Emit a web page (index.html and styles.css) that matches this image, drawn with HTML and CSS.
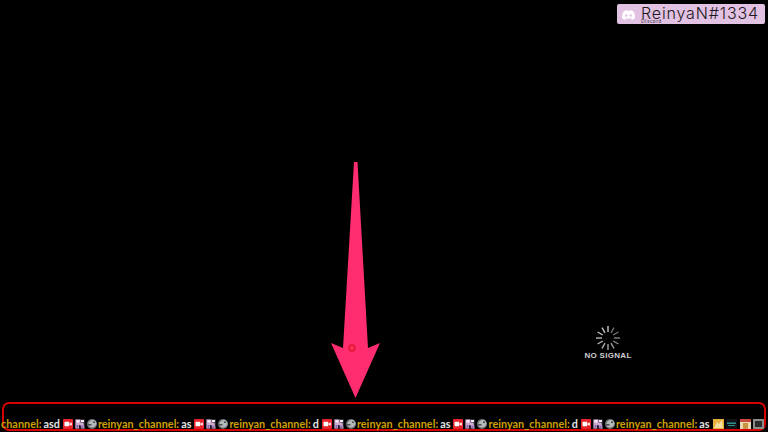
FILE: index.html
```html
<!DOCTYPE html>
<html lang="en">
<head>
    <meta charset="UTF-8">
    <meta name="viewport" content="width=device-width, initial-scale=1.0">
    <title>Stream overlay</title>
    <link rel="stylesheet" href="styles.css">
</head>
<body>
    <svg class="defs" width="0" height="0">
        <symbol id="cam" viewBox="0 0 10 10">
            <rect width="10" height="10" rx="1" fill="#e8212b"/>
            <rect x="1.5" y="2.800" width="4.800" height="4.400" rx=".7" fill="#fff"/>
            <path d="M6.400 4.800l2.400-1.500v3.400L6.400 5.400z" fill="#fff"/>
        </symbol>
        <symbol id="kit" viewBox="0 0 10 10">
            <rect width="10" height="10" fill="#2a2630"/>
            <path d="M.5.5h5v3h3l1 6H6.500L5.500 6H4v3.500H.5z" fill="#cfa9d2"/>
            <path d="M1.500 1h3v2.500h-3zM6 1h3v2H6z" fill="#f2eef2"/>
            <path d="M1.500 6h2v3h-2zM6.500 6.500h2V9h-2z" fill="#8d6fb0"/>
        </symbol>
        <symbol id="orb" viewBox="0 0 10 10">
            <circle cx="5" cy="5" r="5" fill="#70757a"/>
            <path d="M1.500 5.500c0-3 2-4.500 4.500-4.500 2.200 0 3.500 2 3.500 4-1 2.500-3 3.500-4.500 3.500-1.800 0-3.500-1-3.500-3z" fill="#b4b9ba"/>
            <path d="M.5 5h4v1.500h-4zM6 2.500h2V4H6z" fill="#4a4f52"/>
        </symbol>
    </svg>

    <div class="tag-row">
        <div class="tag">
            <svg class="tag-icon" viewBox="0 0 24 18">
                <path fill="#fff" d="M20.300 1.500A19.800 19.800 0 0 0 15.400 0l-.6 1.300a18.400 18.400 0 0 0-5.500 0L8.600 0a19.700 19.700 0 0 0-4.900 1.500C.6 6.100-.3 10.600.100 15a19.900 19.900 0 0 0 6.100 3l1.300-2a13 13 0 0 1-2-1l.5-.4a14.200 14.200 0 0 0 12 0l.5.400a13 13 0 0 1-2 1l1.300 2a19.900 19.900 0 0 0 6.100-3c.5-5.100-.8-9.500-3.600-13.500zM8 12.300c-1.200 0-2.200-1.100-2.200-2.400S6.800 7.400 8 7.400s2.200 1.100 2.200 2.500-1 2.400-2.200 2.400zm8 0c-1.200 0-2.200-1.100-2.200-2.400s1-2.500 2.200-2.500 2.200 1.100 2.200 2.500-1 2.400-2.200 2.400z"/>
            </svg>
            <div class="tag-text">
                <span class="tag-name">ReinyaN#1334</span>
                <span class="tag-sub">Discord</span>
            </div>
        </div>
    </div>

    <div class="chat">
        <div class="chat-line">
            <span class="name">channel:</span><span class="msg">asd</span>
            <span class="badges"><svg><use href="#cam"/></svg><svg><use href="#kit"/></svg><svg><use href="#orb"/></svg></span>
            <span class="name">reinyan_channel:</span><span class="msg">as</span>
            <span class="badges"><svg><use href="#cam"/></svg><svg><use href="#kit"/></svg><svg><use href="#orb"/></svg></span>
            <span class="name">reinyan_channel:</span><span class="msg">d</span>
            <span class="badges"><svg><use href="#cam"/></svg><svg><use href="#kit"/></svg><svg><use href="#orb"/></svg></span>
            <span class="name">reinyan_channel:</span><span class="msg">as</span>
            <span class="badges"><svg><use href="#cam"/></svg><svg><use href="#kit"/></svg><svg><use href="#orb"/></svg></span>
            <span class="name">reinyan_channel:</span><span class="msg">d</span>
            <span class="badges"><svg><use href="#cam"/></svg><svg><use href="#kit"/></svg><svg><use href="#orb"/></svg></span>
            <span class="name">reinyan_channel:</span><span class="msg">as</span>
            <span class="emotes">
                <svg viewBox="0 0 11 10"><rect width="11" height="10" fill="#e8b23c"/><path d="M1 9l3-6 2 2 3-4 1 8z" fill="#f6dfa0"/></svg>
                <svg viewBox="0 0 11 10"><rect width="11" height="10" fill="#101418"/><path d="M1 3.500h9V5H1zM2 6h7v1H2z" fill="#2f8f88"/></svg>
                <svg viewBox="0 0 11 10"><rect width="11" height="10" fill="#e9d9b5"/><path d="M0 0h11v3H0z" fill="#c94a3c"/><path d="M3 4h5v6H3z" fill="#c9933f"/></svg>
                <svg viewBox="0 0 11 10"><rect width="11" height="10" fill="#8b8d8a"/><rect x="2" y="2" width="7" height="6" fill="#2c2d2c"/></svg>
            </span>
        </div>
    </div>

    <svg class="arrow" viewBox="0 0 52 240" width="52" height="240">
        <path d="M24 1h3.500L38 187l12-5-24.500 55L1 182l12 5z" fill="#ff2d6f"/>
        <circle cx="22" cy="187" r="3" fill="#f5305a" stroke="#e4122e" stroke-width="1.400"/>
    </svg>

    <div class="no-signal">
        <svg class="spinner" viewBox="-13 -13 26 26" width="26" height="26">
            <g stroke="#d8d8d8" stroke-width="1.400">
                <path d="M0-12v6" opacity=".95"/>
                <path d="M0-12v6" transform="rotate(30)" opacity=".5"/>
                <path d="M0-12v6" transform="rotate(60)" opacity=".55"/>
                <path d="M0-12v6" transform="rotate(90)" opacity=".6"/>
                <path d="M0-12v6" transform="rotate(120)" opacity=".65"/>
                <path d="M0-12v6" transform="rotate(150)" opacity=".7"/>
                <path d="M0-12v6" transform="rotate(180)" opacity=".75"/>
                <path d="M0-12v6" transform="rotate(210)" opacity=".8"/>
                <path d="M0-12v6" transform="rotate(240)" opacity=".85"/>
                <path d="M0-12v6" transform="rotate(270)" opacity=".85"/>
                <path d="M0-12v6" transform="rotate(300)" opacity=".9"/>
                <path d="M0-12v6" transform="rotate(330)" opacity=".9"/>
            </g>
        </svg>
        <span class="no-signal-text">NO SIGNAL</span>
    </div>
</body>
</html>
```

FILE: styles.css
```css
/* Overlay over a black video feed */
html, body {
    height: 100%;
}
body {
    margin: 0;
    background-color: #000;
    font-family: "Lato", "Liberation Sans", sans-serif;
    display: flex;
    flex-direction: column;
    justify-content: space-between;
    position: relative;
    overflow: hidden;
}
.defs {
    position: absolute;
}

/* Discord tag, top right */
.tag-row {
    display: flex;
    justify-content: flex-end;
    padding: 4px 3px 0 0;
}
.tag {
    width: 148px;
    height: 20px;
    box-sizing: border-box;
    padding-left: 5px;
    display: flex;
    align-items: center;
    gap: 6px;
    background-color: #e2c2e2;
    border-radius: 2px;
}
.tag-icon {
    width: 13px;
    height: 10px;
    margin-top: 2px;
}
.tag-text {
    display: flex;
    flex-direction: column;
    margin-top: 1px;
}
.tag-name {
    font-family: "Inter", "Liberation Sans", sans-serif;
    font-weight: 300;
    font-size: 16px;
    line-height: 12px;
    letter-spacing: 0.85px;
    color: #1c1620;
    white-space: nowrap;
}
.tag-sub {
    font-size: 5px;
    line-height: 4px;
    letter-spacing: 0.6px;
    color: #3a3040;
}

/* Chat ticker */
.chat {
    margin: 0 2px 1px 2px;
    height: 29px;
    box-sizing: border-box;
    border: 2px solid #d90000;
    border-radius: 7px;
    display: flex;
    align-items: flex-end;
}
.chat-line {
    display: flex;
    align-items: center;
    height: 13px;
    margin: 0 0 -1px -3px;
    white-space: nowrap;
    font-size: 10.800px;
    font-weight: 700;
}
.name {
    color: #cfa000;
    letter-spacing: 0.04px;
}
.msg {
    color: #e4e4e4;
    margin-left: 2px;
}
.badges, .emotes {
    display: flex;
    align-items: center;
    margin: 0 1px 0 3px;
    gap: 2px;
}
.badges svg {
    width: 10px;
    height: 10px;
}
.emotes {
    gap: 2.500px;
}
.emotes svg {
    width: 11px;
    height: 10px;
}

/* Pink arrow pointing at the chat */
.arrow {
    position: absolute;
    left: 330px;
    top: 161px;
}

/* Player's no signal state */
.no-signal {
    position: absolute;
    left: 578px;
    top: 325px;
    width: 60px;
    display: flex;
    flex-direction: column;
    align-items: center;
}
.no-signal-text {
    font-family: "Liberation Sans", sans-serif;
    font-weight: 700;
    font-size: 8px;
    line-height: 9px;
    letter-spacing: 0.3px;
    color: #cfcfcf;
    white-space: nowrap;
}
```
